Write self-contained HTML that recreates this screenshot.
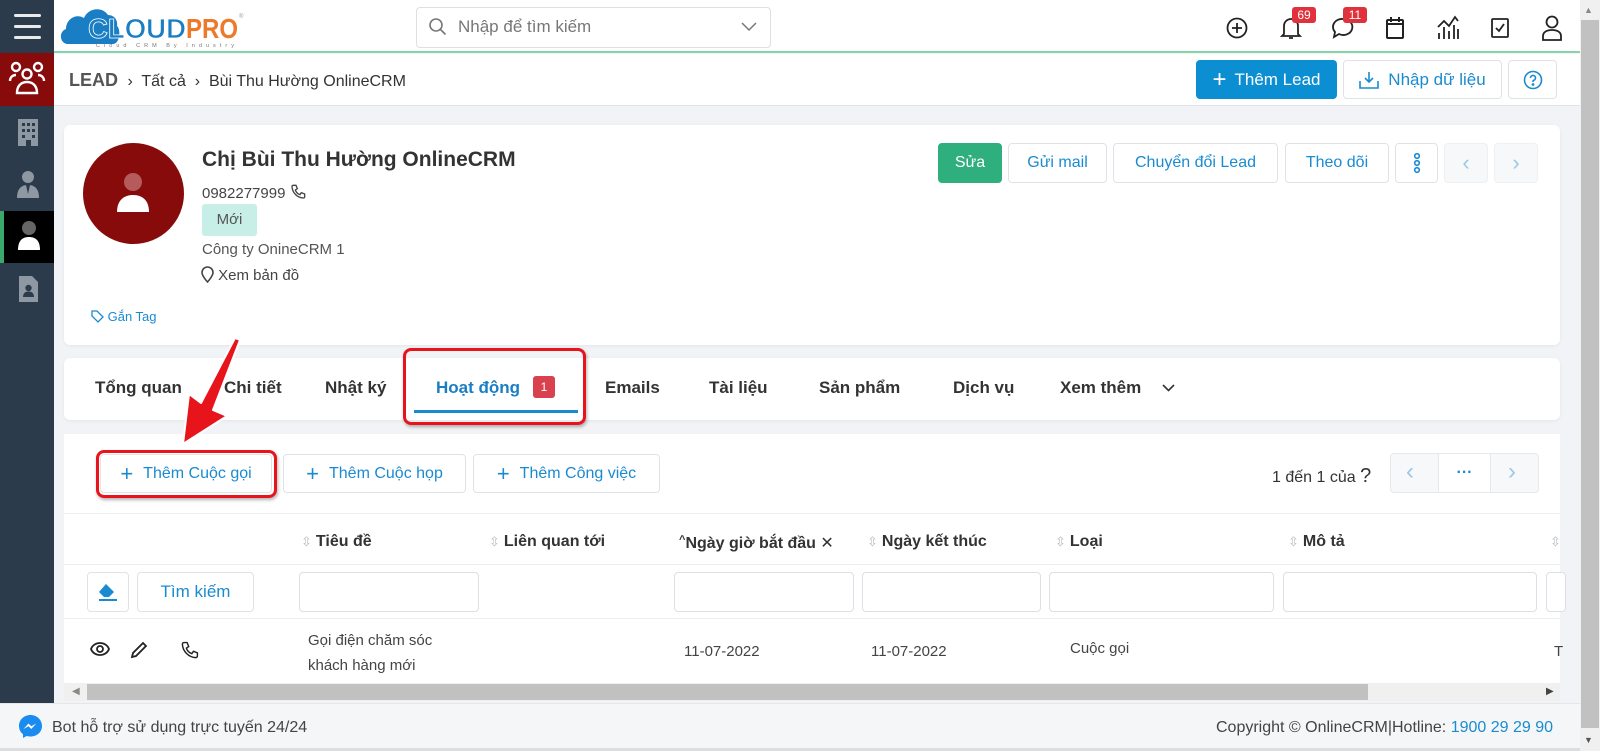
<!DOCTYPE html>
<html><head><meta charset="utf-8">
<style>
*{box-sizing:border-box;margin:0;padding:0}
body{width:1600px;height:751px;overflow:hidden;background:#f1f3f6;font-family:"Liberation Sans",sans-serif;color:#333;position:relative;font-size:15px}
.a{position:absolute}
.side{left:0;top:0;width:54px;height:703px;background:#2c3b4b}
.top{left:54px;top:0;width:1526px;height:53px;background:#fff;border-bottom:2px solid #86d4a8}
.bc{left:54px;top:54px;width:1526px;height:52px;background:#fff;border-bottom:1px solid #e2e5e8}
.card{background:#fff;border-radius:6px;box-shadow:0 1px 3px rgba(0,0,0,.06)}
.btn{position:absolute;border:1px solid #dfe3e8;border-radius:4px;background:#fff;color:#1a8bd0;font-size:16px;display:flex;align-items:center;justify-content:center}
.inp{position:absolute;top:572px;height:40px;border:1px solid #dcdfe3;border-radius:4px;background:#fff}
.hd{position:absolute;top:533px;font-size:16px;font-weight:bold;color:#333}
.si{color:#b8bcc0;font-weight:normal;font-size:13px;margin-right:4px}
.tab{position:absolute;top:378px;font-size:17px;font-weight:bold;color:#333}
</style></head><body>
<div class="a side"></div>
<div class="a" style="left:14px;top:14px;width:27px;height:3px;background:#e8eaec;border-radius:2px"></div>
<div class="a" style="left:14px;top:25px;width:27px;height:3px;background:#e8eaec;border-radius:2px"></div>
<div class="a" style="left:14px;top:36px;width:27px;height:3px;background:#e8eaec;border-radius:2px"></div>
<div class="a" style="left:0;top:53px;width:54px;height:53px;background:#870b0b"></div>
<svg class="a" style="left:8px;top:61px" width="38" height="36" viewBox="0 0 38 36" fill="none" stroke="#fff" stroke-width="2.4"><circle cx="8" cy="6" r="4"/><circle cx="30" cy="6" r="4"/><circle cx="19" cy="13" r="4.5"/><path d="M2 20c0-4 3-6 6-6M36 20c0-4-3-6-6-6M9 32c0-7 4-11 10-11s10 4 10 11z"/></svg>
<svg class="a" style="left:18px;top:119px" width="20" height="27" viewBox="0 0 20 27"><rect x="0" y="0" width="20" height="27" fill="#8e98a3"/><g fill="#2c3b4b"><rect x="4" y="4" width="3" height="3"/><rect x="9" y="4" width="3" height="3"/><rect x="14" y="4" width="3" height="3"/><rect x="4" y="10" width="3" height="3"/><rect x="9" y="10" width="3" height="3"/><rect x="14" y="10" width="3" height="3"/><rect x="4" y="16" width="3" height="3"/><rect x="14" y="16" width="3" height="3"/><rect x="8" y="21" width="5" height="6"/></g></svg>
<svg class="a" style="left:16px;top:170px" width="24" height="28" viewBox="0 0 24 28"><circle cx="12" cy="7" r="6" fill="#8e98a3"/><path d="M1 28c0-9 4-13 11-13s11 4 11 13z" fill="#8e98a3"/><path d="M10 15l2 9 2-9z" fill="#2c3b4b"/></svg>
<div class="a" style="left:0;top:211px;width:54px;height:52px;background:#000;border-left:4px solid #3aa86b"></div>
<svg class="a" style="left:17px;top:220px" width="24" height="30" viewBox="0 0 24 30"><circle cx="12" cy="8" r="7" fill="#666"/><path d="M1 30c0-9 4-13 11-13s11 4 11 13z" fill="#fff"/></svg>
<svg class="a" style="left:19px;top:276px" width="19" height="26" viewBox="0 0 19 26"><path d="M0 0h13l6 6v20H0z" fill="#8e98a3"/><circle cx="9.5" cy="12" r="3.2" fill="#2c3b4b"/><path d="M4 21c0-4 2.5-5.5 5.5-5.5S15 17 15 21z" fill="#2c3b4b"/></svg>

<div class="a top"></div>
<!-- logo -->
<svg class="a" style="left:60px;top:4px" width="190" height="44" viewBox="0 0 190 44"><path d="M8 40c-8 0-10-12-2-15 0-10 10-16 18-11 4-10 18-12 24-3 7 0 10 6 9 11 4 3 3 18-4 18z" fill="#1a7ec4"/><text x="28" y="34" font-family="Liberation Sans,sans-serif" font-weight="bold" font-size="28" fill="#1a7ec4" stroke="#fff" stroke-width=".8" textLength="98" lengthAdjust="spacingAndGlyphs">CLOUD</text><text x="126" y="34" font-family="Liberation Sans,sans-serif" font-weight="bold" font-size="28" fill="#ec7a2a" textLength="52" lengthAdjust="spacingAndGlyphs">PRO</text><text x="179" y="14" font-size="6" fill="#999">®</text><text x="36" y="43" font-family="Liberation Sans,sans-serif" font-size="5.5" fill="#777" textLength="138" lengthAdjust="spacing">Cloud CRM By Industry</text></svg>
<div class="a" style="left:416px;top:7px;width:355px;height:41px;border:1px solid #dcdfe3;border-radius:4px;background:#fff"></div>
<svg class="a" style="left:428px;top:17px" width="20" height="20" viewBox="0 0 20 20" fill="none" stroke="#777" stroke-width="1.6"><circle cx="8" cy="8" r="6"/><path d="M12.5 12.5l5 5"/></svg>
<div class="a" style="left:458px;top:17px;font-size:17px;color:#777">Nhập để tìm kiếm</div>
<svg class="a" style="left:741px;top:22px" width="16" height="10" viewBox="0 0 16 10" fill="none" stroke="#777" stroke-width="1.5"><path d="M1 1l7 7 7-7"/></svg>
<svg class="a" style="left:1226px;top:17px" width="22" height="22" viewBox="0 0 22 22" fill="none" stroke="#222" stroke-width="1.8"><circle cx="11" cy="11" r="9.5"/><path d="M11 6v10M6 11h10"/></svg>
<svg class="a" style="left:1280px;top:16px" width="22" height="24" viewBox="0 0 22 24" fill="none" stroke="#222" stroke-width="1.8"><path d="M4 18V10a7 7 0 0 1 14 0v8l2 2H2zM9 22h4"/></svg>
<div class="a" style="left:1292px;top:7px;width:24px;height:16px;background:#e0323d;border-radius:3px;color:#fff;font-size:12px;text-align:center;line-height:16px">69</div>
<svg class="a" style="left:1331px;top:16px" width="24" height="24" viewBox="0 0 24 24" fill="none" stroke="#222" stroke-width="1.8"><path d="M12 3a9 8 0 1 1-4 15l-5 3 1-5A9 8 0 0 1 12 3z"/></svg>
<div class="a" style="left:1343px;top:7px;width:24px;height:16px;background:#e0323d;border-radius:3px;color:#fff;font-size:12px;text-align:center;line-height:16px">11</div>
<svg class="a" style="left:1385px;top:16px" width="20" height="24" viewBox="0 0 20 24" fill="none" stroke="#222" stroke-width="2"><rect x="2" y="4" width="16" height="18" rx="1"/><path d="M2 8h16M6 1v5M14 1v5"/></svg>
<svg class="a" style="left:1436px;top:15px" width="24" height="25" viewBox="0 0 24 25" fill="none" stroke="#222" stroke-width="1.8"><path d="M2 12l6-6 5 5 6-9 3 4M3 24v-6M8 24v-12M13 24v-8M18 24v-14M22 24v-10"/></svg>
<svg class="a" style="left:1490px;top:17px" width="20" height="22" viewBox="0 0 20 22" fill="none" stroke="#222" stroke-width="1.8"><rect x="2" y="2" width="16" height="18" rx="1"/><path d="M6 11l3 3 5-7"/></svg>
<svg class="a" style="left:1541px;top:15px" width="22" height="26" viewBox="0 0 22 26" fill="none" stroke="#222" stroke-width="1.8"><circle cx="11" cy="7" r="5.5"/><path d="M2 25v-4c0-4 4-6 9-6s9 2 9 6v4z"/></svg>

<div class="a bc"></div>
<div class="a" style="left:69px;top:70px;font-size:18px;color:#555;font-weight:bold">LEAD <span style="font-weight:normal;font-size:16px;color:#333">&nbsp;›&nbsp; Tất cả &nbsp;›&nbsp; Bùi Thu Hường OnlineCRM</span></div>
<div class="a" style="left:1196px;top:60px;width:141px;height:39px;background:#0b8ed2;border-radius:4px;color:#fff;font-size:17px;display:flex;align-items:center;justify-content:center"><span style="font-size:24px;margin-right:8px;font-weight:300">+</span>Thêm Lead</div>
<div class="btn" style="left:1343px;top:60px;width:159px;height:39px;font-size:17px"><svg width="20" height="18" viewBox="0 0 20 18" fill="none" stroke="#1a8bd0" stroke-width="1.6" style="margin-right:9px"><path d="M10 1v10M6 7l4 4 4-4M1 10v7h18v-7"/></svg>Nhập dữ liệu</div>
<div class="btn" style="left:1508px;top:60px;width:49px;height:39px"><svg width="20" height="20" viewBox="0 0 20 20" fill="none" stroke="#1a8bd0" stroke-width="1.6"><circle cx="10" cy="10" r="8.5"/><path d="M7.5 8a2.5 2.5 0 1 1 3 2.4c-.5.2-.5.8-.5 1.6"/><circle cx="10" cy="14.5" r=".6" fill="#1a8bd0"/></svg></div>

<div class="a card" style="left:64px;top:125px;width:1496px;height:220px"></div>
<div class="a" style="left:83px;top:143px;width:101px;height:101px;border-radius:50%;background:#870b0b"></div>
<svg class="a" style="left:115px;top:172px" width="36" height="42" viewBox="0 0 36 42"><circle cx="18" cy="10" r="9" fill="#b55b5b"/><path d="M2 40c0-11 6-17 16-17s16 6 16 17z" fill="#fff"/></svg>
<div class="a" style="left:202px;top:148px;font-size:21px;font-weight:bold;color:#333">Chị Bùi Thu Hường OnlineCRM</div>
<div class="a" style="left:202px;top:184px;font-size:15px;color:#444">0982277999 <svg width="16" height="16" viewBox="0 0 24 24" fill="none" stroke="#444" stroke-width="2" style="vertical-align:-2px"><path d="M5 2h4l2 5-3 2a11 11 0 0 0 7 7l2-3 5 2v4a2 2 0 0 1-2 2A18 18 0 0 1 3 4a2 2 0 0 1 2-2z"/></svg></div>
<div class="a" style="left:202px;top:204px;width:55px;height:32px;background:#c7efe7;border-radius:3px;color:#555;font-size:15px;text-align:center;line-height:32px">Mới</div>
<div class="a" style="left:202px;top:241px;font-size:15px;color:#555">Công ty OnineCRM 1</div>
<div class="a" style="left:201px;top:266px;font-size:15px;color:#444"><svg width="13" height="17" viewBox="0 0 13 17" fill="none" stroke="#444" stroke-width="1.6" style="vertical-align:-3px"><path d="M6.5 16S1 10 1 6.5a5.5 5.5 0 0 1 11 0C12 10 6.5 16 6.5 16z"/></svg> Xem bản đồ</div>
<div class="a" style="left:91px;top:309px;font-size:13px;color:#1a8bd0"><svg width="13" height="13" viewBox="0 0 13 13" fill="none" stroke="#1a8bd0" stroke-width="1.3" style="vertical-align:-2px"><path d="M1 1h5l6 6-5 5-6-6z"/></svg> Gắn Tag</div>
<div class="a" style="left:938px;top:143px;width:64px;height:40px;background:#2fae7e;border-radius:4px;color:#fff;font-size:16px;text-align:center;line-height:40px">Sửa</div>
<div class="btn" style="left:1008px;top:143px;width:99px;height:40px">Gửi mail</div>
<div class="btn" style="left:1113px;top:143px;width:165px;height:40px">Chuyển đổi Lead</div>
<div class="btn" style="left:1285px;top:143px;width:104px;height:40px">Theo dõi</div>
<div class="btn" style="left:1395px;top:143px;width:43px;height:40px"><svg width="8" height="22" viewBox="0 0 8 22" fill="none" stroke="#1a8bd0" stroke-width="1.6"><circle cx="4" cy="4" r="2.3"/><circle cx="4" cy="11" r="2.3"/><circle cx="4" cy="18" r="2.3"/></svg></div>
<div class="btn" style="left:1444px;top:143px;width:44px;height:40px;background:#f6f8fa;border-color:#eef0f2;color:#9cc8e6;font-size:22px">‹</div>
<div class="btn" style="left:1494px;top:143px;width:44px;height:40px;background:#f6f8fa;border-color:#eef0f2;color:#9cc8e6;font-size:22px">›</div>

<div class="a card" style="left:64px;top:358px;width:1496px;height:62px"></div>
<div class="tab" style="left:95px">Tổng quan</div>
<div class="tab" style="left:224px">Chi tiết</div>
<div class="tab" style="left:325px">Nhật ký</div>
<div class="tab" style="left:436px;color:#1a7ec4">Hoạt động</div>
<div class="a" style="left:533px;top:376px;width:22px;height:22px;background:#d9414f;border-radius:3px;color:#fff;font-size:12px;text-align:center;line-height:22px">1</div>
<div class="a" style="left:414px;top:410px;width:164px;height:3px;background:#1a8bd0"></div>
<div class="tab" style="left:605px">Emails</div>
<div class="tab" style="left:709px">Tài liệu</div>
<div class="tab" style="left:819px">Sản phẩm</div>
<div class="tab" style="left:953px">Dịch vụ</div>
<div class="tab" style="left:1060px">Xem thêm</div>
<svg class="a" style="left:1162px;top:384px" width="13" height="8" viewBox="0 0 13 8" fill="none" stroke="#333" stroke-width="1.6"><path d="M1 1l5.5 5.5L12 1"/></svg>
<div class="a" style="left:403px;top:348px;width:183px;height:77px;border:3px solid #e8141b;border-radius:8px;box-shadow:1px 2px 3px rgba(0,0,0,.3)"></div>

<div class="a" style="left:64px;top:434px;width:1496px;height:249px;background:#fff"></div>
<div class="btn" style="left:100px;top:454px;width:172px;height:39px"><span style="font-size:22px;margin-right:10px;font-weight:300">+</span>Thêm Cuộc gọi</div>
<div class="btn" style="left:283px;top:454px;width:183px;height:39px"><span style="font-size:22px;margin-right:10px;font-weight:300">+</span>Thêm Cuộc họp</div>
<div class="btn" style="left:473px;top:454px;width:187px;height:39px"><span style="font-size:22px;margin-right:10px;font-weight:300">+</span>Thêm Công việc</div>
<div class="a" style="left:96px;top:450px;width:181px;height:48px;border:3px solid #e8141b;border-radius:8px;box-shadow:1px 2px 3px rgba(0,0,0,.3)"></div>
<div class="a" style="left:1272px;top:465px;font-size:16px;color:#333">1 đến 1 của <span style="font-size:20px">?</span></div>
<div class="a" style="left:1390px;top:453px;width:149px;height:40px;border:1px solid #e6e9ec;border-radius:4px;background:#f6f8fa"></div>
<div class="a" style="left:1438px;top:454px;width:53px;height:38px;background:#fff;border-left:1px solid #e6e9ec;border-right:1px solid #e6e9ec;color:#1a8bd0;text-align:center;line-height:38px;font-weight:bold;font-size:16px">···</div>
<div class="a" style="left:1406px;top:458px;color:#9cc8e6;font-size:24px">‹</div>
<div class="a" style="left:1508px;top:458px;color:#9cc8e6;font-size:24px">›</div>
<div class="a" style="left:64px;top:513px;width:1496px;height:1px;background:#eceef0"></div>
<div class="hd" style="left:301px"><span class="si">⇳</span>Tiêu đề</div>
<div class="hd" style="left:489px"><span class="si">⇳</span>Liên quan tới</div>
<div class="hd" style="left:679px"><span style="font-size:11px;vertical-align:5px">^</span>Ngày giờ bắt đầu <span style="font-weight:normal">✕</span></div>
<div class="hd" style="left:867px"><span class="si">⇳</span>Ngày kết thúc</div>
<div class="hd" style="left:1055px"><span class="si">⇳</span>Loại</div>
<div class="hd" style="left:1288px"><span class="si">⇳</span>Mô tả</div>
<div class="hd" style="left:1550px"><span class="si">⇳</span></div>
<div class="a" style="left:64px;top:564px;width:1496px;height:1px;background:#eceef0"></div>
<div class="btn" style="left:87px;top:572px;width:42px;height:40px"><svg width="22" height="20" viewBox="0 0 22 20"><path d="M9 2l8 8-5 5H7l-5-5z" fill="#1a8bd0"/><path d="M2 18h18" stroke="#1a8bd0" stroke-width="2"/></svg></div>
<div class="btn" style="left:137px;top:572px;width:117px;height:40px;font-size:17px">Tìm kiếm</div>
<div class="inp" style="left:299px;width:180px"></div>
<div class="inp" style="left:674px;width:180px"></div>
<div class="inp" style="left:862px;width:179px"></div>
<div class="inp" style="left:1049px;width:225px"></div>
<div class="inp" style="left:1283px;width:254px"></div>
<div class="inp" style="left:1546px;width:20px"></div>
<div class="a" style="left:64px;top:618px;width:1496px;height:1px;background:#eceef0"></div>
<svg class="a" style="left:90px;top:641px" width="20" height="16" viewBox="0 0 20 16" fill="none" stroke="#222" stroke-width="1.8"><path d="M1 8c3-8 15-8 18 0-3 8-15 8-18 0z"/><circle cx="10" cy="8" r="3"/></svg>
<svg class="a" style="left:130px;top:641px" width="18" height="18" viewBox="0 0 18 18" fill="none" stroke="#222" stroke-width="1.8"><path d="M2 16l1-4L13 2l3 3L6 15z"/></svg>
<svg class="a" style="left:180px;top:641px" width="19" height="19" viewBox="0 0 24 24" fill="none" stroke="#222" stroke-width="1.8"><path d="M5 2h4l2 5-3 2a11 11 0 0 0 7 7l2-3 5 2v4a2 2 0 0 1-2 2A18 18 0 0 1 3 4a2 2 0 0 1 2-2z"/></svg>
<div class="a" style="left:308px;top:628px;font-size:15px;color:#444;line-height:25px">Gọi điện chăm sóc<br>khách hàng mới</div>
<div class="a" style="left:684px;top:643px;font-size:15px;color:#444">11-07-2022</div>
<div class="a" style="left:871px;top:643px;font-size:15px;color:#444">11-07-2022</div>
<div class="a" style="left:1070px;top:640px;font-size:15px;color:#444">Cuộc gọi</div>
<div class="a" style="left:1554px;top:643px;font-size:15px;color:#444">T</div>
<div class="a" style="left:64px;top:683px;width:1496px;height:18px;background:#f0f0f0"></div>
<div class="a" style="left:87px;top:684px;width:1281px;height:16px;background:#c1c1c1"></div>
<div class="a" style="left:72px;top:686px;font-size:10px;color:#888">◀</div>
<div class="a" style="left:1546px;top:686px;font-size:10px;color:#444">▶</div>
<svg class="a" style="left:175px;top:338px" width="80" height="110" viewBox="0 0 80 110"><polygon points="65,2 38,72 52,78 8,106 14,56 26,65 60,0" fill="#e8141b" stroke="#fff" stroke-width="2" stroke-linejoin="round"/></svg>
<div class="a" style="left:0;top:703px;width:1580px;height:45px;background:#f5f6f7;border-top:1px solid #e4e6e8"></div>
<svg class="a" style="left:18px;top:714px" width="25" height="25" viewBox="0 0 25 25"><path d="M12.5 1C6 1 1 5.7 1 12c0 3.4 1.5 6.3 4 8.3V24l3.6-2c1.2.3 2.5.5 3.9.5C19 22.5 24 18 24 12S19 1 12.5 1z" fill="#1a8cf0"/><path d="M5.5 15l5-5.5 2.8 2.8 5-2.8-5 5.5-2.8-2.8z" fill="#fff"/></svg>
<div class="a" style="left:52px;top:719px;font-size:16px;color:#444">Bot hỗ trợ sử dụng trực tuyến 24/24</div>
<div class="a" style="left:1216px;top:719px;font-size:16px;color:#444">Copyright © OnlineCRM|Hotline: <span style="color:#1a8bd0">1900 29 29 90</span></div>
<div class="a" style="left:1580px;top:0;width:20px;height:751px;background:#f0f0f0"></div>
<div class="a" style="left:1581px;top:20px;width:18px;height:708px;background:#c1c1c1"></div>
<div class="a" style="left:1584px;top:5px;font-size:9px;color:#888">▲</div>
<div class="a" style="left:1584px;top:735px;font-size:9px;color:#555">▼</div>
<div class="a" style="left:0;top:748px;width:1580px;height:3px;background:#ddd"></div>
</body></html>
